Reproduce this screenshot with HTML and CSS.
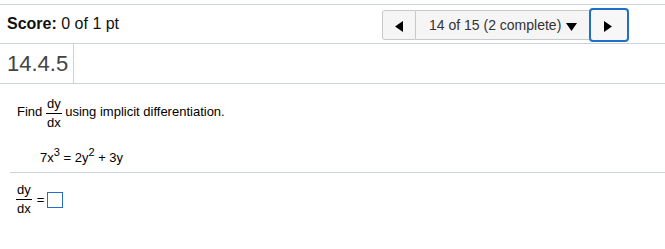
FILE: index.html
```html
<!DOCTYPE html>
<html lang="en">
<head>
    <meta charset="UTF-8">
    <meta name="viewport" content="width=device-width, initial-scale=1.0">
    <title>Homework - 14.4.5</title>
    <link rel="stylesheet" href="styles.css">
</head>
<body>
    <!-- Score and question navigation -->
    <div class="topbar">
        <div class="score"><b>Score:</b> 0 of 1 pt</div>
        <div class="nav">
            <button class="nav-prev" title="Previous question">
                <svg width="8" height="11" viewBox="0 0 8 11"><polygon points="8,0 8,11 0,5.5" fill="#000"/></svg>
            </button>
            <div class="nav-mid">
                <span>14 of 15 (2 complete)</span>
                <svg width="11" height="8" viewBox="0 0 11 8"><polygon points="0,0 11,0 5.5,8" fill="#000"/></svg>
            </div>
            <button class="nav-next" title="Next question">
                <svg width="8" height="11" viewBox="0 0 8 11"><polygon points="0,0 8,5.5 0,11" fill="#000"/></svg>
            </button>
        </div>
    </div>

    <!-- Question number -->
    <div class="qrow">
        <div class="qid">14.4.5</div>
    </div>

    <!-- Question text -->
    <div class="question">
        <p class="prompt">Find <span class="frac"><span class="num">dy</span><span class="den">dx</span></span> using implicit differentiation.</p>
        <p class="eq">7x<sup>3</sup> = 2y<sup>2</sup> + 3y</p>
    </div>

    <!-- Answer -->
    <div class="answer">
        <span class="frac"><span class="num">dy</span><span class="den">dx</span></span>
        <span class="eqsign">=</span>
        <span class="answer-box"></span>
    </div>
</body>
</html>
```

FILE: styles.css
```css
body { margin: 0; font-family: "Liberation Sans", Arial, sans-serif; color: #000; background: #fff; }

.topbar { margin-top: 4px; height: 38px; border-top: 1px solid #ccd0da; border-bottom: 1px solid #ccd0da; display: flex; align-items: center; justify-content: space-between; padding: 0 36px 0 7px; }
.score { font-size: 16px; color: #111; }
.nav { display: flex; align-items: center; margin-top: 2px; }
.nav button { margin: 0; padding: 0; display: flex; align-items: center; justify-content: center; cursor: pointer; flex: none; }
.nav-prev { width: 34px; height: 30px; border: 1px solid #c8c8c8; border-radius: 3px 0 0 3px; background: #f5f5f5; }
.nav-prev svg { margin-top: 3px; margin-left: -1px; }
.nav-mid { width: 148px; height: 28px; border-top: 1px solid #c8c8c8; border-bottom: 1px solid #c8c8c8; background: #f5f5f5; padding: 0 12px 0 13px; display: flex; align-items: center; justify-content: space-between; font-size: 14px; color: #333; }
.nav-mid svg { margin-top: 3px; flex: none; }
.nav-next { width: 40px; height: 34px; border: 2px solid #1f6fc5; border-radius: 4px; background: #f7f7f7; }
.nav-next svg { margin-top: 3px; margin-left: -3px; }

.qrow { height: 39px; border-bottom: 1px solid #ccd0da; display: flex; }
.qid { font-size: 22px; color: #444; padding: 0 5px 0 7px; border-right: 1px solid #ccd0da; display: flex; align-items: center; }

.question { margin-left: 10px; border-bottom: 1px solid #ccd0da; padding: 13px 0 4px 7px; font-size: 13px; }
.prompt { margin: 0; }
.eq { margin: 18px 0 0 23px; line-height: 20px; }
.eq sup { font-size: 11px; line-height: 0; vertical-align: 6px; }

.frac { display: inline-flex; flex-direction: column; align-items: center; vertical-align: 8px; font-size: 13px; line-height: 14px; }
.frac .num { padding: 0 1px 2px; border-bottom: 1px solid #000; }
.frac .den { padding-top: 2px; }

.answer { display: flex; align-items: center; padding: 10px 0 0 16px; font-size: 13px; }
.eqsign { margin: 0 3px 0 5px; }
.answer-box { width: 14px; height: 14px; border: 1px solid #2a6acf; }
```
